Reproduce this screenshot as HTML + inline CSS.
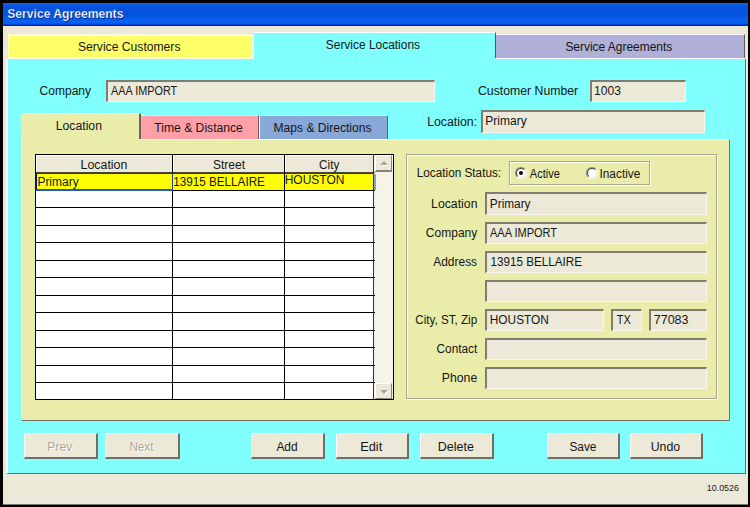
<!DOCTYPE html>
<html>
<head>
<meta charset="utf-8">
<title>Service Agreements</title>
<style>
html,body{margin:0;padding:0;}
body{width:750px;height:507px;overflow:hidden;background:#000;position:relative;
  font-family:"Liberation Sans",sans-serif;font-size:12px;color:#151515;}
.a{position:absolute;box-sizing:border-box;}
.t{position:absolute;white-space:nowrap;line-height:14px;height:14px;transform-origin:0 0;}
/* sunken text field */
.f{position:absolute;box-sizing:border-box;background:#ece9d8;
  border-top:2px solid #7f7c70;border-left:2px solid #7f7c70;
  border-right:1px solid #f8f7ef;border-bottom:1px solid #f8f7ef;}
/* raised button */
.b{position:absolute;box-sizing:border-box;background:#ece9d8;
  border-top:1px solid #fff;border-left:1px solid #fff;
  border-right:2px solid #716f64;border-bottom:2px solid #716f64;}
.hl{position:absolute;height:1px;background:#000;left:36px;width:339px;}
.vl{position:absolute;width:1px;background:#000;top:154px;height:245px;}
</style>
</head>
<body>
<!-- window client -->
<div class="a" style="left:3px;top:3px;width:745px;height:501px;background:#ece9d8;"></div>

<div class="a" style="left:3px;top:504px;width:745px;height:1px;background:#7a786e;"></div>
<!-- title bar -->
<div class="a" style="left:3px;top:3px;width:745px;height:23px;background:linear-gradient(to bottom,#1068f4 0%,#0a5ce8 7%,#0552dc 16%,#0452dc 52%,#075cec 68%,#0a62f4 86%,#0848e0 92%,#0224c0 97%,#0220b8 100%);"></div>

<!-- main cyan panel -->
<div class="a" style="left:6px;top:59px;width:740px;height:415px;background:#80ffff;border-right:1px solid #716f64;border-bottom:1px solid #716f64;border-left:2px solid #fbfaf4;"></div>

<!-- top tabs -->
<div class="a" style="left:8px;top:34px;width:246px;height:25px;background:#ffff68;border-top:1px solid #fbf6e0;border-left:1px solid #ffffb8;border-right:2px solid #fbfff0;"></div>
<div class="a" style="left:8px;top:35px;width:244px;height:1px;background:#ffffc0;"></div>
<div class="a" style="left:8px;top:57px;width:246px;height:2px;background:#fdfde4;"></div>
<div class="a" style="left:254px;top:32px;width:242px;height:28px;background:#80ffff;border-top:1px solid #f4ffff;border-right:1px solid #565a60;"></div>
<div class="a" style="left:254px;top:58px;width:242px;height:6px;background:#80ffff;"></div>
<div class="a" style="left:496px;top:34px;width:249px;height:24px;background:#b0b0d8;border-top:1px solid #f4f4ff;border-right:1px solid #5c5c5c;"></div>
<div class="a" style="left:496px;top:58px;width:250px;height:1px;background:#f8f8ff;"></div>

<!-- company row -->
<div class="f" style="left:106px;top:80px;width:329px;height:22px;"></div>
<div class="f" style="left:590px;top:80px;width:96px;height:22px;"></div>

<!-- inner tabs -->
<div class="a" style="left:141px;top:115px;width:118px;height:24px;background:#ffa0a8;border-top:1px solid #ffe0e2;border-right:1px solid #6a5a56;"></div>
<div class="a" style="left:259px;top:115px;width:129px;height:24px;background:#88a8d8;border-top:1px solid #e4f0ff;border-left:1px solid #f4f8ff;border-right:1px solid #5e6470;"></div>

<div class="f" style="left:481px;top:110px;width:224px;height:23px;"></div>

<!-- khaki panel -->
<div class="a" style="left:21px;top:139px;width:709px;height:282px;background:#eaecaa;border-top:1px solid #fffff0;border-left:1px solid #f6f6d0;border-right:1px solid #716f64;border-bottom:1px solid #716f64;"></div>
<!-- selected inner tab -->
<div class="a" style="left:21px;top:113px;width:120px;height:27px;background:#eaecaa;border-top:1px solid #f0fce0;border-left:1px solid #f2ecc0;border-right:2px solid #6e625a;"></div>
<div class="a" style="left:139px;top:139px;width:2px;height:1px;background:#eaecaa;"></div>

<!-- grid -->
<div class="a" style="left:35px;top:154px;width:359px;height:246px;background:#fff;border:1px solid #000;"></div>
<div class="a" style="left:36px;top:155px;width:136px;height:17px;background:#ece9d8;box-shadow:inset 1px 1px 0 #fff;"></div>
<div class="a" style="left:173px;top:155px;width:111px;height:17px;background:#ece9d8;box-shadow:inset 1px 1px 0 #fff;"></div>
<div class="a" style="left:285px;top:155px;width:88px;height:17px;background:#ece9d8;box-shadow:inset 1px 1px 0 #fff;"></div>
<div class="a" style="left:36px;top:173px;width:337px;height:17px;background:#ffff00;"></div>
<div class="a" style="left:36px;top:173px;width:337px;height:1px;background:#3a3a2a;"></div>
<div class="a" style="left:374px;top:155px;width:19px;height:244px;background:#f5f3ea;"></div>
<div class="a" style="left:374px;top:174px;width:2px;height:16px;background:#8c9ccc;"></div>
<div class="hl" style="top:172px;background:#4a483e;"></div>
<div class="hl" style="top:190px;"></div>
<div class="hl" style="top:207px;"></div>
<div class="hl" style="top:225px;"></div>
<div class="hl" style="top:242px;"></div>
<div class="hl" style="top:260px;"></div>
<div class="hl" style="top:277px;"></div>
<div class="hl" style="top:295px;"></div>
<div class="hl" style="top:312px;"></div>
<div class="hl" style="top:330px;"></div>
<div class="hl" style="top:347px;"></div>
<div class="hl" style="top:365px;"></div>
<div class="hl" style="top:382px;"></div>
<div class="vl" style="left:172px;"></div>
<div class="vl" style="left:284px;"></div>
<div class="vl" style="left:373px;background:#333;"></div>
<!-- focus cell -->
<div class="a" style="left:35px;top:173px;width:138px;height:18px;border-left:2px solid #0a1648;border-right:1px solid #1c3c9c;border-bottom:2px solid #2458d0;"></div>
<!-- scrollbar buttons -->
<div class="a" style="left:375px;top:155px;width:17px;height:17px;background:#ece9d8;border-top:1px solid #fff;border-left:1px solid #fff;border-right:1px solid #8a887c;border-bottom:2px solid #85837a;"></div>
<div class="a" style="left:381px;top:162px;width:0;height:0;border-left:4px solid transparent;border-right:4px solid transparent;border-bottom:4px solid #fff;"></div>
<div class="a" style="left:380px;top:161px;width:0;height:0;border-left:4px solid transparent;border-right:4px solid transparent;border-bottom:4px solid #aca899;"></div>
<div class="a" style="left:375px;top:383px;width:17px;height:16px;background:#ece9d8;border-top:1px solid #fff;border-left:1px solid #fff;border-right:1px solid #8a887c;border-bottom:1px solid #8a887c;"></div>
<div class="a" style="left:381px;top:391px;width:0;height:0;border-left:4px solid transparent;border-right:4px solid transparent;border-top:4px solid #fff;"></div>
<div class="a" style="left:380px;top:390px;width:0;height:0;border-left:4px solid transparent;border-right:4px solid transparent;border-top:4px solid #aca899;"></div>

<!-- group box -->
<div class="a" style="left:406px;top:154px;width:311px;height:245px;border:1px solid #a8a690;box-shadow:1px 1px 0 #fdfde8, inset 1px 1px 0 #fdfde8;"></div>
<div class="a" style="left:509px;top:161px;width:141px;height:24px;border:1px solid #a8a690;box-shadow:1px 1px 0 #fdfde8, inset 1px 1px 0 #fdfde8;"></div>
<!-- radios -->
<div class="a" style="left:515px;top:167px;width:12px;height:12px;border-radius:50%;background:#fff;border:1px solid #808080;border-right-color:#fff;border-bottom-color:#fff;"></div>
<div class="a" style="left:516px;top:168px;width:10px;height:10px;border-radius:50%;background:#fff;border:1px solid #404040;border-right-color:#e4e2d4;border-bottom-color:#e4e2d4;"></div>
<div class="a" style="left:519px;top:171px;width:4px;height:4px;border-radius:50%;background:#000;"></div>
<div class="a" style="left:586px;top:167px;width:12px;height:12px;border-radius:50%;background:#fff;border:1px solid #808080;border-right-color:#fff;border-bottom-color:#fff;"></div>
<div class="a" style="left:587px;top:168px;width:10px;height:10px;border-radius:50%;background:#fff;border:1px solid #404040;border-right-color:#e4e2d4;border-bottom-color:#e4e2d4;"></div>

<div class="f" style="left:485px;top:192px;width:222px;height:23px;"></div>
<div class="f" style="left:485px;top:222px;width:222px;height:22px;"></div>
<div class="f" style="left:485px;top:251px;width:222px;height:22px;"></div>
<div class="f" style="left:485px;top:280px;width:222px;height:22px;"></div>
<div class="f" style="left:485px;top:309px;width:119px;height:22px;"></div>
<div class="f" style="left:611px;top:309px;width:31px;height:22px;"></div>
<div class="f" style="left:649px;top:309px;width:58px;height:22px;"></div>
<div class="f" style="left:485px;top:338px;width:222px;height:22px;"></div>
<div class="f" style="left:485px;top:367px;width:222px;height:22px;"></div>

<!-- buttons -->
<div class="b" style="left:24px;top:433px;width:74px;height:26px;"></div>
<div class="b" style="left:105px;top:433px;width:75px;height:26px;"></div>
<div class="b" style="left:251px;top:433px;width:74px;height:26px;"></div>
<div class="b" style="left:336px;top:433px;width:73px;height:26px;"></div>
<div class="b" style="left:420px;top:433px;width:74px;height:26px;"></div>
<div class="b" style="left:547px;top:433px;width:73px;height:26px;"></div>
<div class="b" style="left:630px;top:433px;width:73px;height:26px;"></div>

<div class="t" style="left:7px;top:6px;transform:translateX(0.27px) scaleX(0.9324);font-size:13px;font-weight:bold;color:#fff;line-height:16px;height:16px;text-shadow:1px 1px 0 #0a2a8a;-webkit-text-stroke:0.25px #0654de;">Service Agreements</div>
<div class="t" style="left:77px;top:40px;transform:translateX(0.98px) scaleX(1.0111);">Service Customers</div>
<div class="t" style="left:325px;top:38px;transform:translateX(0.78px) scaleX(0.9947);">Service Locations</div>
<div class="t" style="left:565px;top:40px;transform:translateX(0.38px) scaleX(0.9953);">Service Agreements</div>
<div class="t" style="left:39px;top:84px;transform:translateX(0.58px) scaleX(1.0023);">Company</div>
<div class="t" style="left:111px;top:84px;transform:translateX(0.00px) scaleX(0.9057);">AAA IMPORT</div>
<div class="t" style="left:477px;top:84px;transform:translateX(0.96px) scaleX(1.0220);">Customer Number</div>
<div class="t" style="left:594px;top:84px;transform:translateX(0.12px) scaleX(1.0051);">1003</div>
<div class="t" style="left:154px;top:121px;transform:translateX(0.25px) scaleX(1.0116);">Time &amp; Distance</div>
<div class="t" style="left:273px;top:121px;transform:translateX(0.49px) scaleX(1.0065);">Maps &amp; Directions</div>
<div class="t" style="left:427px;top:115px;transform:translateX(0.18px) scaleX(1.0242);">Location:</div>
<div class="t" style="left:485px;top:114px;transform:translateX(0.21px) scaleX(1.0029);">Primary</div>
<div class="t" style="left:55px;top:119px;transform:translateX(0.69px) scaleX(1.0201);">Location</div>
<div class="t" style="left:80px;top:158px;transform:translateX(0.56px) scaleX(1.0319);">Location</div>
<div class="t" style="left:212px;top:158px;transform:translateX(0.98px) scaleX(1.0037);">Street</div>
<div class="t" style="left:319px;top:158px;transform:translateX(0.10px) scaleX(0.9750);">City</div>
<div class="t" style="left:37px;top:175px;transform:translateX(0.40px) scaleX(0.9971);">Primary</div>
<div class="t" style="left:173px;top:175px;transform:translateX(0.15px) scaleX(0.9757);">13915 BELLAIRE</div>
<div class="t" style="left:284px;top:173px;transform:translateX(0.71px) scaleX(0.9978);">HOUSTON</div>
<div class="t" style="left:416px;top:166px;transform:translateX(0.73px) scaleX(0.9806);">Location Status:</div>
<div class="t" style="left:529px;top:167px;transform:translateX(0.80px) scaleX(0.9221);">Active</div>
<div class="t" style="left:599px;top:167px;transform:translateX(0.48px) scaleX(0.9876);">Inactive</div>
<div class="t" style="left:431px;top:197px;transform:translateX(0.07px) scaleX(1.0232);">Location</div>
<div class="t" style="left:425px;top:226px;transform:translateX(0.87px) scaleX(1.0002);">Company</div>
<div class="t" style="left:433px;top:255px;transform:translateX(0.19px) scaleX(0.9974);">Address</div>
<div class="t" style="left:415px;top:313px;transform:translateX(0.29px) scaleX(0.9701);">City, ST, Zip</div>
<div class="t" style="left:436px;top:342px;transform:translateX(0.59px) scaleX(0.9844);">Contact</div>
<div class="t" style="left:441px;top:371px;transform:translateX(0.79px) scaleX(1.0223);">Phone</div>
<div class="t" style="left:489px;top:197px;transform:translateX(0.82px) scaleX(0.9847);">Primary</div>
<div class="t" style="left:490px;top:226px;transform:translateX(0.00px) scaleX(0.9159);">AAA IMPORT</div>
<div class="t" style="left:490px;top:255px;transform:translateX(0.44px) scaleX(0.9731);">13915 BELLAIRE</div>
<div class="t" style="left:489px;top:313px;transform:translateX(0.82px) scaleX(0.9870);">HOUSTON</div>
<div class="t" style="left:616px;top:313px;transform:translateX(0.77px) scaleX(0.9160);">TX</div>
<div class="t" style="left:653px;top:313px;transform:translateX(0.75px) scaleX(1.0426);">77083</div>
<div class="t" style="left:47px;top:440px;transform:translateX(0.29px) scaleX(1.0159);color:#aca899;text-shadow:1px 1px 0 #fff;">Prev</div>
<div class="t" style="left:129px;top:440px;transform:translateX(0.43px) scaleX(0.9735);color:#aca899;text-shadow:1px 1px 0 #fff;">Next</div>
<div class="t" style="left:276px;top:440px;transform:translateX(0.39px) scaleX(0.9940);">Add</div>
<div class="t" style="left:360px;top:440px;transform:translateX(0.25px) scaleX(1.0634);">Edit</div>
<div class="t" style="left:437px;top:440px;transform:translateX(0.77px) scaleX(1.0410);">Delete</div>
<div class="t" style="left:569px;top:440px;transform:translateX(0.38px) scaleX(0.9901);">Save</div>
<div class="t" style="left:650px;top:440px;transform:translateX(0.69px) scaleX(1.0279);">Undo</div>
<div class="t" style="left:706px;top:483px;transform:translateX(0.77px) scaleX(0.9884);font-size:9px;line-height:11px;height:11px;color:#222;">10.0526</div>
</body>
</html>
